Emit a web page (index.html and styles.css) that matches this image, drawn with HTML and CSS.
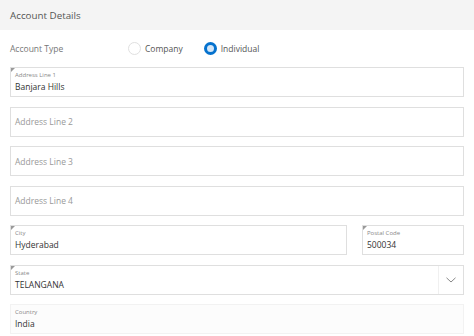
FILE: index.html
```html
<!DOCTYPE html>
<html lang="en">
<head>
  <meta charset="UTF-8" />
  <title>Account Details</title>
  <link rel="stylesheet" href="styles.css">
</head>
<body>
  <div class="header">Account Details</div>

  <div class="form">
    <div class="type-row">
      <span class="type-label">Account Type</span>
      <label class="radio"><span class="dot"></span>Company</label>
      <label class="radio checked"><span class="dot"></span>Individual</label>
    </div>

    <div class="field filled">
      <span class="corner"></span>
      <span class="small">Address Line 1</span>
      <span class="value">Banjara Hills</span>
    </div>
    <div class="field"><span class="hint">Address Line 2</span></div>
    <div class="field"><span class="hint">Address Line 3</span></div>
    <div class="field"><span class="hint">Address Line 4</span></div>

    <div class="pair">
      <div class="field filled">
        <span class="corner"></span>
        <span class="small">City</span>
        <span class="value">Hyderabad</span>
      </div>
      <div class="field filled">
        <span class="corner"></span>
        <span class="small">Postal Code</span>
        <span class="value">500034</span>
      </div>
    </div>

    <div class="field filled select">
      <span class="corner"></span>
      <div class="select-text">
        <span class="small">State</span>
        <span class="value">TELANGANA</span>
      </div>
      <div class="arrow">
        <svg width="10" height="6" viewBox="0 0 10 6"><path d="M0.5 0.8 L5 5 L9.5 0.8" fill="none" stroke="#888" stroke-width="1"/></svg>
      </div>
    </div>

    <div class="field filled readonly">
      <span class="small">Country</span>
      <span class="value">India</span>
    </div>
  </div>
</body>
</html>
```

FILE: styles.css
```css
body {
  margin: 0;
  font-family: 'Open Sans', sans-serif;
  background: #fff;
  color: #333;
}
.header {
  height: 30px;
  line-height: 31px;
  padding-left: 10px;
  background: #f4f4f4;
  color: #555;
  font-size: 9.8px;
}
.form {
  padding: 0 10px;
}
.type-row {
  display: flex;
  align-items: center;
  height: 36px;
  margin-bottom: 1px;
  font-size: 8.5px;
}
.type-label {
  width: 118px;
  color: #777;
}
.radio {
  display: flex;
  align-items: center;
  margin-right: 21px;
  color: #555;
}
.dot {
  width: 13px;
  height: 13px;
  border: 1px solid #e0e0e0;
  border-radius: 50%;
  margin-right: 4px;
  box-sizing: border-box;
}
.radio.checked .dot {
  border: 3.5px solid #0572ce;
  background: #d4e6f7;
}
.field {
  position: relative;
  box-sizing: border-box;
  height: 30px;
  margin-bottom: 9.5px;
  border: 1px solid #dfdfdf;
  display: flex;
  flex-direction: column;
  justify-content: center;
  padding-left: 4px;
}
.hint {
  font-size: 8.5px;
  color: #999;
}
.small {
  font-size: 6px;
  color: #888;
  line-height: 9px;
}
.value {
  font-size: 8.5px;
  color: #333;
  line-height: 13px;
}
.corner {
  position: absolute;
  left: 0;
  top: 0;
  width: 0;
  height: 0;
  border-top: 4px solid #999;
  border-right: 4px solid transparent;
}
.pair {
  display: flex;
  gap: 15px;
}
.pair .field:first-child {
  width: 337px;
}
.pair .field:last-child {
  flex: 1;
}
.select {
  flex-direction: row;
  align-items: stretch;
  padding-left: 0;
}
.select-text {
  flex: 1;
  display: flex;
  flex-direction: column;
  justify-content: center;
  padding-left: 4px;
}
.arrow {
  width: 24px;
  border-left: 1px solid #f0f0f0;
  display: flex;
  align-items: center;
  justify-content: center;
}
.readonly {
  border-color: #f2f2f2;
  background: #fcfcfc;
}
```
